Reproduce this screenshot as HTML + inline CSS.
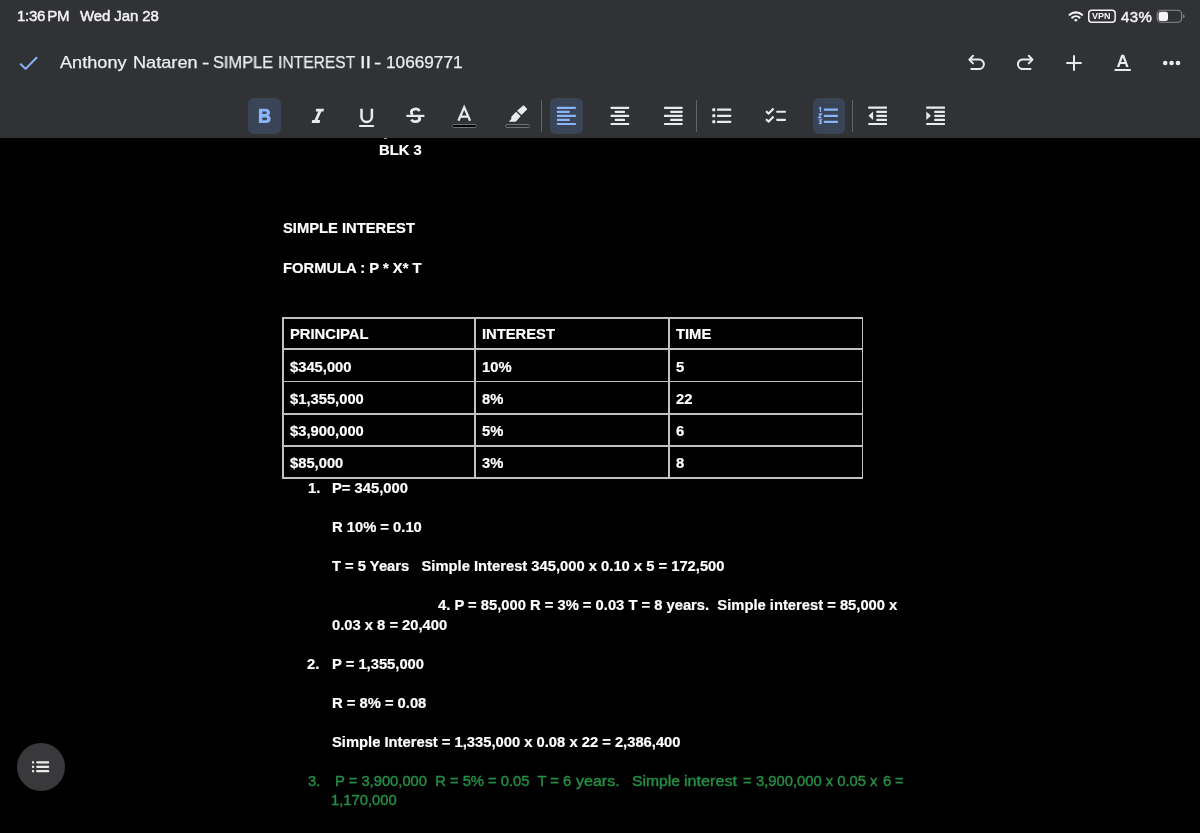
<!DOCTYPE html>
<html><head><meta charset="utf-8">
<style>
html,body{margin:0;padding:0;}
body{-webkit-font-smoothing:antialiased;width:1200px;height:833px;overflow:hidden;background:#000;position:relative;font-family:"Liberation Sans",sans-serif;}
.hdr{position:absolute;left:0;top:0;width:1200px;height:138px;background:#313236;}
.t{position:absolute;white-space:pre;line-height:1;will-change:transform;}
.doc{font-size:14.75px;font-weight:bold;color:#fff;-webkit-text-stroke:0.2px #fff;}
.grn{color:#258e46;font-weight:normal;-webkit-text-stroke:0.4px #258e46;}
.grn b{font-weight:bold;}
.btnact{position:absolute;top:97.5px;width:32.5px;height:36.5px;border-radius:6px;background:#3a4457;}
.sep{position:absolute;top:99.5px;width:1.2px;height:32.5px;background:#606367;}
.hl{position:absolute;height:1.5px;background:#c0c0c0;}
.vl{position:absolute;width:1.5px;background:#c0c0c0;}
.ttl{top:54.3px;font-size:17px;color:#eceef0;-webkit-text-stroke:0.25px #eceef0;transform-origin:0 0;}
svg.ic{position:absolute;left:0;top:0;overflow:visible;}
</style></head>
<body>
<div class="hdr"></div>

<div class="t" style="left:17px;top:8.3px;font-size:15px;color:#f4f4f4;-webkit-text-stroke:0.45px #f4f4f4;letter-spacing:-0.3px;">1:36<span style="letter-spacing:-2px"> </span>PM</div>
<div class="t" style="left:79.5px;top:8.3px;font-size:15px;color:#f4f4f4;-webkit-text-stroke:0.45px #f4f4f4;letter-spacing:-0.1px;">Wed Jan 28</div>
<div class="t" style="left:1120.5px;top:8.6px;font-size:15px;color:#f4f4f4;-webkit-text-stroke:0.45px #f4f4f4;letter-spacing:0.4px;">43%</div>

<div class="t ttl" style="left:60px;transform:scaleX(1.067);">Anthony</div>
<div class="t ttl" style="left:132.5px;transform:scaleX(1.068);">Nataren</div>
<div class="t ttl" style="left:201.8px;transform:scaleX(1.3);">-</div>
<div class="t ttl" style="left:213.2px;transform:scaleX(0.964);">SIMPLE</div>
<div class="t ttl" style="left:278.4px;transform:scaleX(0.918);">INTEREST</div>
<div class="t ttl" style="left:359.5px;transform:scaleX(1.19);">II</div>
<div class="t ttl" style="left:374.4px;transform:scaleX(1.3);">-</div>
<div class="t ttl" style="left:386.2px;transform:scaleX(1.012);">10669771</div>

<div class="btnact" style="left:248px;"></div>
<div class="btnact" style="left:550px;"></div>
<div class="btnact" style="left:812.5px;"></div>
<div class="sep" style="left:540.9px;"></div>
<div class="sep" style="left:696.3px;"></div>
<div class="sep" style="left:852.1px;"></div>

<svg class="ic" width="1200" height="138" viewBox="0 0 1200 138">
 <g fill="none" stroke-linecap="round" stroke-linejoin="round">
  <!-- check -->
  <path d="M20.8,64.3 L25.6,68.9 L36.5,57.7" stroke="#8ab4f8" stroke-width="2"/>
  <!-- undo -->
  <path d="M973,55.8 L969.3,59.6 L973,63.4 M969.5,59.6 H979.3 A4.6,4.7 0 0 1 979.3,69 H971.3" stroke="#e8eaed" stroke-width="2"/>
  <!-- redo -->
  <path d="M1028.8,55.8 L1032.5,59.6 L1028.8,63.4 M1032.3,59.6 H1022.5 A4.6,4.7 0 0 0 1022.5,69 H1030.5" stroke="#e8eaed" stroke-width="2"/>
  <!-- plus -->
  <path d="M1074,55.3 V70.7 M1066.3,63 H1081.7" stroke="#e8eaed" stroke-width="2" stroke-linecap="butt"/>
  <!-- A underline -->
  <path d="M1116.9,66.9 L1121.3,54.8 H1124.1 L1128.6,66.9 H1126.1 L1125.2,64.1 H1120.4 L1119.4,66.9 Z M1121.1,62 H1124.5 L1122.8,57.4 Z" fill="#e8eaed" stroke="none" fill-rule="evenodd"/>
  <!-- wifi -->
  <path d="M1069.6,14.8 A9.2,9.2 0 0 1 1082.1,14.8 M1072.2,17.6 A5.5,5.5 0 0 1 1079.5,17.6" stroke="#f4f4f4" stroke-width="2.1"/>
  <!-- vpn box -->
  <rect x="1088.75" y="10.25" width="26.4" height="12" rx="3" stroke="#f4f4f4" stroke-width="1.5"/>
  <!-- battery -->
  <rect x="1157.2" y="10.2" width="24.4" height="12" rx="3.8" stroke="#8a8a8e" stroke-width="1.1"/>
  <!-- text color bar -->
  <rect x="452.5" y="124.5" width="23.8" height="3" rx="1" fill="#000" stroke="#6e7175" stroke-width="1"/>
  <rect x="505.7" y="124.5" width="23.8" height="3" rx="1" fill="#2b2c30" stroke="#6e7175" stroke-width="1"/>
  <!-- U -->
  <path d="M361.5,108.7 V116.8 A5.2,5.2 0 0 0 371.9,116.8 V108.7" stroke="#e8eaed" stroke-width="2.5" stroke-linecap="butt"/>
  <path d="M360,126.05 H373.2" stroke="#e8eaed" stroke-width="2.1"/>
  <!-- S strike -->
  <path d="M419.45,111.1 A4.2,3.2 0 0 0 411.3,112.2 A4.2,3.3 0 0 0 412.7,114.6" stroke="#e8eaed" stroke-width="2.8" stroke-linecap="butt"/>
  <path d="M418.3,116.6 A4.2,3.1 0 0 1 419.7,118.5 A4.2,3 0 0 1 411.5,119.5" stroke="#e8eaed" stroke-width="2.8" stroke-linecap="butt"/>
  <path d="M406.4,115.9 H424.4" stroke="#e8eaed" stroke-width="2.2" stroke-linecap="butt"/>
  <!-- A text color -->
  <path d="M458.4,120.7 L464.2,107.2 L470.1,120.7 M460.5,116.6 H468" stroke="#e8eaed" stroke-width="2.2" stroke-linecap="butt" stroke-linejoin="miter"/>
  <!-- checklist -->
  <path d="M766,111.2 L768.7,113.6 L773.6,108.6 M766,119.2 L768.7,121.6 L773.6,116.6" stroke="#e8eaed" stroke-width="2.2" stroke-linecap="butt"/>
 </g>
 <g fill="#e8eaed">
  <!-- dots more -->
  <circle cx="1165.2" cy="63" r="2.3"/><circle cx="1171.6" cy="63" r="2.3"/><circle cx="1178" cy="63" r="2.3"/>
  <rect x="1114.4" y="68.9" width="16.6" height="2.1" rx="0.8"/>
  <!-- wifi dot -->
  <path d="M1073.9,20 L1075.85,21.8 L1077.8,20 A2.8,2.8 0 0 0 1073.9,20 Z" fill="#f4f4f4"/>
  <!-- battery fill/cap -->
  <rect x="1158.6" y="11.7" width="9.4" height="9.3" rx="2.2" fill="#f4f4f4"/>
  <path d="M1183.2,14.3 A2.2,2.2 0 0 1 1183.2,18.3 Z" fill="#8a8a8e"/>
  <!-- B -->
  <path fill="#8ab4f8" fill-rule="evenodd" d="M258.9,108.7 H265.3 C268.4,108.7 270,110.3 270,112.4 C270,113.7 269.4,114.7 268.3,115.3 C269.8,115.9 270.6,117.2 270.6,118.9 C270.6,121.3 268.8,122.9 265.7,122.9 H258.9 Z M262.4,111.4 V113.9 H265.1 C266.2,113.9 266.8,113.4 266.8,112.6 C266.8,111.9 266.2,111.4 265.1,111.4 Z M262.4,117.4 V120.2 H265.4 C266.6,120.2 267.2,119.6 267.2,118.8 C267.2,117.9 266.6,117.4 265.4,117.4 Z"/>
  <!-- I -->
  <path d="M316.2,108.7 H324 L323.5,111.6 H321.4 L317.6,120 H320.1 L319.7,123 H311.7 L312.2,120 H314.5 L318.3,111.6 H315.7 Z"/>
  <!-- highlighter -->
  <path d="M523.2,105.6 Q523.6,105.3 524,105.6 L527,108.7 Q527.3,109.2 527,109.6 L521.5,115.1 L517,110.7 Z"/>
  <path d="M516.1,111.8 L520.6,116.3 L515.8,121.8 H508.8 L511.3,119 V116.8 Z"/>
  <!-- left align (blue) -->
  <g fill="#8ab4f8">
   <rect x="556.9" y="106.7" width="19" height="2.2" rx="0.6"/>
   <rect x="556.9" y="110.7" width="12.9" height="2.2" rx="0.6"/>
   <rect x="556.9" y="114.8" width="19" height="2.2" rx="0.6"/>
   <rect x="556.9" y="118.8" width="12.9" height="2.2" rx="0.6"/>
   <rect x="556.9" y="122.9" width="19" height="2.2" rx="0.6"/>
  </g>
  <!-- center align -->
  <rect x="610.6" y="106.7" width="18.6" height="2.2" rx="0.6"/>
  <rect x="614.8" y="110.7" width="10.2" height="2.2" rx="0.6"/>
  <rect x="610.6" y="114.8" width="18.6" height="2.2" rx="0.6"/>
  <rect x="614.8" y="118.8" width="10.2" height="2.2" rx="0.6"/>
  <rect x="610.6" y="122.9" width="18.6" height="2.2" rx="0.6"/>
  <!-- right align -->
  <rect x="664" y="106.7" width="18.6" height="2.2" rx="0.6"/>
  <rect x="670.2" y="110.7" width="12.4" height="2.2" rx="0.6"/>
  <rect x="664" y="114.8" width="18.6" height="2.2" rx="0.6"/>
  <rect x="670.2" y="118.8" width="12.4" height="2.2" rx="0.6"/>
  <rect x="664" y="122.9" width="18.6" height="2.2" rx="0.6"/>
  <!-- bullets -->
  <circle cx="713.8" cy="109.7" r="1.7"/><circle cx="713.8" cy="115.8" r="1.7"/><circle cx="713.8" cy="121.8" r="1.7"/>
  <rect x="717" y="108.6" width="14.2" height="2.2" rx="0.6"/>
  <rect x="717" y="114.7" width="14.2" height="2.2" rx="0.6"/>
  <rect x="717" y="120.7" width="14.2" height="2.2" rx="0.6"/>
  <!-- checklist lines -->
  <rect x="776.3" y="110.65" width="9.6" height="2.2" rx="0.6"/>
  <rect x="776.3" y="118.7" width="9.6" height="2.2" rx="0.6"/>
  <!-- numbered (blue) -->
  <g fill="#8ab4f8">
   <rect x="823.9" y="108.6" width="14.1" height="2.2" rx="0.6"/>
   <rect x="823.9" y="114.7" width="14.1" height="2.2" rx="0.6"/>
   <rect x="823.9" y="120.7" width="14.1" height="2.2" rx="0.6"/>
  </g>
  <g fill="none" stroke="#8ab4f8" stroke-width="1.3">
   <path d="M819,108.3 L820.4,107.6 V112"/>
   <path d="M818.8,114 H821.4 L818.8,117.6 H821.6"/>
   <path d="M818.8,119.9 H821.4 L820,121.5 Q821.6,121.8 821.6,122.6 Q821.4,123.6 818.8,123.6"/>
  </g>
  <!-- decrease indent -->
  <rect x="868.2" y="106.6" width="18.8" height="2.2" rx="0.6"/>
  <rect x="876.3" y="110.7" width="10.7" height="2.2" rx="0.6"/>
  <rect x="876.3" y="114.7" width="10.7" height="2.2" rx="0.6"/>
  <rect x="876.3" y="118.8" width="10.7" height="2.2" rx="0.6"/>
  <rect x="868.2" y="122.9" width="18.8" height="2.2" rx="0.6"/>
  <path d="M868.5,115.8 L873.1,111.6 V120 Z"/>
  <!-- increase indent -->
  <rect x="926.2" y="106.6" width="18.8" height="2.2" rx="0.6"/>
  <rect x="934.3" y="110.7" width="10.7" height="2.2" rx="0.6"/>
  <rect x="934.3" y="114.7" width="10.7" height="2.2" rx="0.6"/>
  <rect x="934.3" y="118.8" width="10.7" height="2.2" rx="0.6"/>
  <rect x="926.2" y="122.9" width="18.8" height="2.2" rx="0.6"/>
  <path d="M930.9,115.8 L926.3,111.6 V120 Z"/>
 </g>
</svg>
<div class="t" style="left:1092.2px;top:11.7px;font-size:9px;font-weight:bold;color:#f4f4f4;letter-spacing:0px;">VPN</div>

<!-- table -->
<div class="hl" style="left:282.4px;top:317.2px;width:581px;"></div>
<div class="hl" style="left:282.4px;top:348.2px;width:581px;"></div>
<div class="hl" style="left:282.4px;top:380.7px;width:581px;"></div>
<div class="hl" style="left:282.4px;top:413px;width:581px;"></div>
<div class="hl" style="left:282.4px;top:445.3px;width:581px;"></div>
<div class="hl" style="left:282.4px;top:477.1px;width:581px;"></div>
<div class="vl" style="left:282.4px;top:317.2px;height:161.5px;"></div>
<div class="vl" style="left:474.2px;top:317.2px;height:161.5px;"></div>
<div class="vl" style="left:668px;top:317.2px;height:161.5px;"></div>
<div class="vl" style="left:861.6px;top:317.2px;height:161.5px;"></div>

<div class="t doc" style="left:379.4px;top:143.3px;">BLK 3</div>
<div class="t doc" style="left:283px;top:221.26px;">SIMPLE INTEREST</div>
<div class="t doc" style="left:283px;top:260.51px;">FORMULA : P * X* T</div>
<div class="t doc" style="left:290px;top:327.01px;">PRINCIPAL</div>
<div class="t doc" style="left:482px;top:327.01px;">INTEREST</div>
<div class="t doc" style="left:676px;top:327.01px;">TIME</div>
<div class="t doc" style="left:290px;top:359.8px;">$345,000</div>
<div class="t doc" style="left:482px;top:359.8px;">10%</div>
<div class="t doc" style="left:676px;top:359.8px;">5</div>
<div class="t doc" style="left:290px;top:391.9px;">$1,355,000</div>
<div class="t doc" style="left:482px;top:391.9px;">8%</div>
<div class="t doc" style="left:676px;top:391.9px;">22</div>
<div class="t doc" style="left:290px;top:423.9px;">$3,900,000</div>
<div class="t doc" style="left:482px;top:423.9px;">5%</div>
<div class="t doc" style="left:676px;top:423.9px;">6</div>
<div class="t doc" style="left:290px;top:455.51px;">$85,000</div>
<div class="t doc" style="left:482px;top:455.51px;">3%</div>
<div class="t doc" style="left:676px;top:455.51px;">8</div>
<div class="t doc" style="left:307.6px;top:481.01px;">1.</div>
<div class="t doc" style="left:331.5px;top:481.01px;">P= 345,000</div>
<div class="t doc" style="left:331.5px;top:519.81px;">R 10% = 0.10</div>
<div class="t doc" style="left:331.5px;top:558.91px;">T = 5 Years   Simple Interest 345,000 x 0.10 x 5 = 172,500</div>
<div class="t doc" style="left:437.6px;top:598.3px;">4. P = 85,000 R = 3% = 0.03 T = 8 years.  Simple interest = 85,000 x</div>
<div class="t doc" style="left:331.5px;top:617.6px;">0.03 x 8 = 20,400</div>
<div class="t doc" style="left:307.3px;top:657.1px;">2.</div>
<div class="t doc" style="left:331.5px;top:657.1px;">P = 1,355,000</div>
<div class="t doc" style="left:331.5px;top:695.51px;">R = 8% = 0.08</div>
<div class="t doc" style="left:331.5px;top:735.1px;">Simple Interest = 1,335,000 x 0.08 x 22 = 2,386,400</div>
<div class="t doc grn" style="left:308px;top:773.51px;">3.</div>
<div class="t doc grn" style="left:335px;top:773.51px;">P = 3,900,000  R = 5% = 0.05  T = 6</div>
<div class="t doc grn" style="left:575.8px;top:773.51px;transform:scaleX(1.087);transform-origin:0 0;">years.</div>
<div class="t doc grn" style="left:631.8px;top:773.51px;transform:scaleX(1.066);transform-origin:0 0;">Simple</div>
<div class="t doc grn" style="left:684.3px;top:773.51px;transform:scaleX(1.096);transform-origin:0 0;">interest</div>
<div class="t doc grn" style="left:742.8px;top:773.51px;">=</div>
<div class="t doc grn" style="left:756px;top:773.51px;">3,900,000 x 0.05 x</div>
<div class="t doc grn" style="left:883.3px;top:773.51px;">6</div>
<div class="t doc grn" style="left:895.3px;top:773.51px;">=</div>
<div class="t doc grn" style="left:331px;top:793.01px;">1,170,000</div>

<!-- tiny artifact under toolbar -->
<div style="position:absolute;left:383.6px;top:137.7px;width:3.4px;height:1.3px;border-radius:0 0 1.5px 1.5px;background:#b5b5b5;"></div>

<!-- FAB -->
<div style="position:absolute;left:16.6px;top:742.5px;width:48.5px;height:48.5px;border-radius:50%;background:#39393b;"></div>
<svg class="ic" width="1200" height="833">
 <g fill="#ececec">
  <rect x="32" y="761.3" width="2.1" height="2.1"/><rect x="32" y="765.8" width="2.1" height="2.1"/><rect x="32" y="770.1" width="2.1" height="2.1"/>
  <rect x="36.2" y="761.3" width="13" height="2.1" rx="0.8"/><rect x="36.2" y="765.8" width="13" height="2.1" rx="0.8"/><rect x="36.2" y="770.1" width="13" height="2.1" rx="0.8"/>
 </g>
</svg>
</body></html>
